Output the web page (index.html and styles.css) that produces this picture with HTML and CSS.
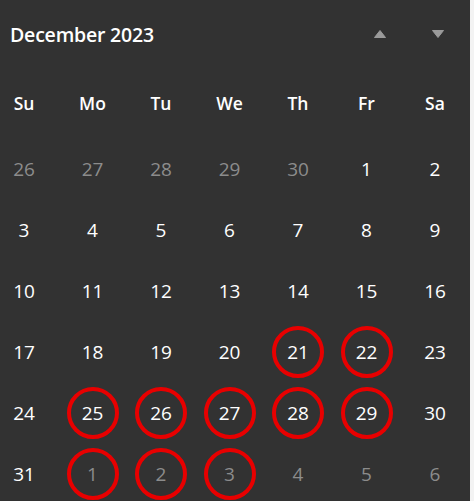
FILE: index.html
```html
<!DOCTYPE html>
<html>
<head>
  <title>Calendar - December 2023</title>
  <link rel="stylesheet" href="styles.css">
</head>
<body>
  <div class="calendar">
    <div class="cal-header">
      <div class="cal-title">December 2023</div>
      <div class="cal-nav">
        <button class="nav-btn" title="Previous">
          <svg width="12" height="8" viewBox="0 0 12 8"><polygon points="0.5,7.5 6,0.5 11.5,7.5" fill="#9a9a9a" stroke="#9a9a9a" stroke-linejoin="round"/></svg>
        </button>
        <button class="nav-btn" title="Next">
          <svg width="12" height="8" viewBox="0 0 12 8"><polygon points="0.5,0.5 11.5,0.5 6,7.5" fill="#9a9a9a" stroke="#9a9a9a" stroke-linejoin="round"/></svg>
        </button>
      </div>
    </div>

    <div class="cal-grid">
      <div class="weekday">Su</div>
      <div class="weekday">Mo</div>
      <div class="weekday">Tu</div>
      <div class="weekday">We</div>
      <div class="weekday">Th</div>
      <div class="weekday">Fr</div>
      <div class="weekday">Sa</div>

      <div class="day other"><span>26</span></div>
      <div class="day other"><span>27</span></div>
      <div class="day other"><span>28</span></div>
      <div class="day other"><span>29</span></div>
      <div class="day other"><span>30</span></div>
      <div class="day"><span>1</span></div>
      <div class="day"><span>2</span></div>

      <div class="day"><span>3</span></div>
      <div class="day"><span>4</span></div>
      <div class="day"><span>5</span></div>
      <div class="day"><span>6</span></div>
      <div class="day"><span>7</span></div>
      <div class="day"><span>8</span></div>
      <div class="day"><span>9</span></div>

      <div class="day"><span>10</span></div>
      <div class="day"><span>11</span></div>
      <div class="day"><span>12</span></div>
      <div class="day"><span>13</span></div>
      <div class="day"><span>14</span></div>
      <div class="day"><span>15</span></div>
      <div class="day"><span>16</span></div>

      <div class="day"><span>17</span></div>
      <div class="day"><span>18</span></div>
      <div class="day"><span>19</span></div>
      <div class="day"><span>20</span></div>
      <div class="day marked"><span>21</span></div>
      <div class="day marked"><span>22</span></div>
      <div class="day"><span>23</span></div>

      <div class="day"><span>24</span></div>
      <div class="day marked"><span>25</span></div>
      <div class="day marked"><span>26</span></div>
      <div class="day marked"><span>27</span></div>
      <div class="day marked"><span>28</span></div>
      <div class="day marked"><span>29</span></div>
      <div class="day"><span>30</span></div>

      <div class="day"><span>31</span></div>
      <div class="day other marked"><span>1</span></div>
      <div class="day other marked"><span>2</span></div>
      <div class="day other marked"><span>3</span></div>
      <div class="day other"><span>4</span></div>
      <div class="day other"><span>5</span></div>
      <div class="day other"><span>6</span></div>
    </div>
  </div>
</body>
</html>
```

FILE: styles.css
```css
* {
  margin: 0;
  padding: 0;
  box-sizing: border-box;
  font-family: 'Open Sans', 'Noto Sans', sans-serif;
}

body {
  background: #f3f3f3;
  width: 474px;
  height: 501px;
  overflow: hidden;
}

.calendar {
  width: 470px;
  height: 501px;
  background: #323232;
  color: #ffffff;
}

.cal-header {
  display: flex;
  align-items: center;
  height: 68px;
  padding: 0 12px 0 10px;
}

.cal-title {
  font-size: 19.5px;
  font-weight: 600;
  letter-spacing: -0.2px;
}

.cal-nav {
  margin-left: auto;
  display: flex;
  gap: 18px;
}

.nav-btn {
  width: 40px;
  height: 30px;
  background: transparent;
  border: none;
  display: flex;
  align-items: center;
  justify-content: center;
  cursor: pointer;
}

.cal-grid {
  display: grid;
  grid-template-columns: repeat(7, 48px);
  grid-template-rows: 70px repeat(6, 61px);
  column-gap: 20.5px;
}

.weekday {
  display: flex;
  align-items: center;
  justify-content: center;
  font-size: 17.5px;
  font-weight: 600;
}

.day {
  display: flex;
  align-items: center;
  justify-content: center;
  font-size: 19px;
}

.day span {
  width: 52px;
  height: 52px;
  display: flex;
  align-items: center;
  justify-content: center;
  border-radius: 50%;
  flex-shrink: 0;
}

.day.other {
  color: #8c8c8c;
}

.day.marked span {
  border: 4.5px solid #e80000;
}
```
